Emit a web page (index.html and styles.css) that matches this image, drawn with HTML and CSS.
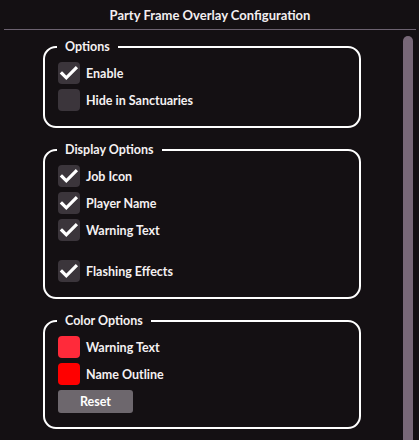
FILE: index.html
```html
<!DOCTYPE html>
<html>
<head>
<meta charset="utf-8">
<link rel="stylesheet" href="styles.css">
</head>
<body>
<div class="window">
  <div class="titlebar">Party Frame Overlay Configuration</div>
  <div class="body">
    <div class="panels">
      <fieldset class="group">
        <legend>Options</legend>
        <div class="rows">
          <div class="row"><span class="box checked"><svg viewBox="0 0 22 22"><path d="M4 11.5 L8.3 15.8 L17.8 6.3"/></svg></span><span class="label">Enable</span></div>
          <div class="row"><span class="box"></span><span class="label">Hide in Sanctuaries</span></div>
        </div>
      </fieldset>
      <fieldset class="group">
        <legend>Display Options</legend>
        <div class="rows">
          <div class="row"><span class="box checked"><svg viewBox="0 0 22 22"><path d="M4 11.5 L8.3 15.8 L17.8 6.3"/></svg></span><span class="label">Job Icon</span></div>
          <div class="row"><span class="box checked"><svg viewBox="0 0 22 22"><path d="M4 11.5 L8.3 15.8 L17.8 6.3"/></svg></span><span class="label">Player Name</span></div>
          <div class="row"><span class="box checked"><svg viewBox="0 0 22 22"><path d="M4 11.5 L8.3 15.8 L17.8 6.3"/></svg></span><span class="label">Warning Text</span></div>
          <div class="row spaced"><span class="box checked"><svg viewBox="0 0 22 22"><path d="M4 11.5 L8.3 15.8 L17.8 6.3"/></svg></span><span class="label">Flashing Effects</span></div>
        </div>
      </fieldset>
      <fieldset class="group">
        <legend>Color Options</legend>
        <div class="rows">
          <div class="row"><span class="swatch warn"></span><span class="label">Warning Text</span></div>
          <div class="row"><span class="swatch outline"></span><span class="label">Name Outline</span></div>
          <div class="row"><button class="reset">Reset</button></div>
        </div>
      </fieldset>
    </div>
    <div class="scrollbar"></div>
  </div>
</div>
</body>
</html>
```

FILE: styles.css
```css
html, body {
  margin: 0;
  padding: 0;
  height: 100%;
  overflow: hidden;
}
body {
  background: #141013;
  color: #ffffff;
  font-family: Lato, "Liberation Sans", sans-serif;
  font-weight: 700;
}
.window {
  display: flex;
  flex-direction: column;
  height: 440px;
}
.titlebar {
  margin: 0 3px 0 4px;
  border-bottom: 1px solid #6c6270;
  display: flex;
  align-items: center;
  justify-content: center;
  font-size: 13px;
  color: #f2eef0;
  padding-top: 1px;
  box-sizing: border-box;
  height: 30px;
}
.body {
  display: flex;
  flex: 1;
  min-height: 0;
}
.panels {
  width: 318px;
  margin-left: 43px;
  padding-top: 9px;
  display: flex;
  flex-direction: column;
  gap: 14px;
}
.group {
  margin: 0;
  border: 2px solid #ffffff;
  border-radius: 13px;
  padding: 0 0 15px 12px;
  min-width: 0;
}
.group legend {
  padding: 0 8px;
  margin-left: 0;
  font-size: 12.5px;
  line-height: 16px;
  height: 16px;
  color: #f4f0f2;
}
.rows {
  padding-top: 7px;
  padding-left: 1px;
  display: flex;
  flex-direction: column;
  gap: 5px;
}
.row {
  display: flex;
  align-items: center;
  gap: 5px;
  height: 22px;
}
.row.spaced {
  margin-top: 14px;
}
.box {
  width: 22px;
  height: 22px;
  border-radius: 4px;
  background: #3b353b;
  display: flex;
}
.box svg {
  width: 22px;
  height: 22px;
}
.box svg path {
  fill: none;
  stroke: #ffffff;
  stroke-width: 3.2;
  stroke-linecap: square;
  stroke-linejoin: miter;
}
.label {
  font-size: 12.5px;
  color: #f4f0f2;
  padding-left: 1px;
}
.swatch {
  width: 22px;
  height: 22px;
  border-radius: 4px;
}
.swatch.warn { background: #ff2a3a; }
.swatch.outline { background: #ff0000; }
.reset {
  width: 75px;
  height: 23px;
  border: none;
  border-radius: 3px;
  background: #6d676d;
  color: #ffffff;
  font-family: Lato, "Liberation Sans", sans-serif;
  font-weight: 700;
  font-size: 12.5px;
  padding: 0;
  margin-top: 1px;
}
.scrollbar {
  width: 10px;
  margin-left: 42px;
  margin-top: 6px;
  background: #786878;
  border-radius: 5px 5px 0 0;
}
```
